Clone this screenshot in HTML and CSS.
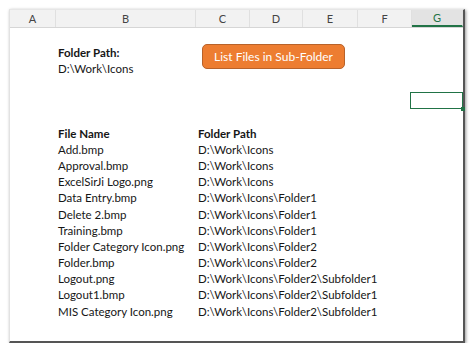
FILE: index.html
```html
<!DOCTYPE html>
<html lang="en">
<head>
    <meta charset="UTF-8">
    <title>List Files in Sub-Folder</title>
    <link rel="stylesheet" href="styles.css">
</head>
<body>

    <div class="sheet">
        <div class="col-head">
            <div>A</div>
            <div>B</div>
            <div>C</div>
            <div>D</div>
            <div>E</div>
            <div>F</div>
            <div class="active">G</div>
        </div>

        <div class="top">
            <div class="path-block">
                <div class="bold">Folder Path:</div>
                <div>D:\Work\Icons</div>
            </div>
            <button class="run-btn">List Files in Sub-Folder</button>
        </div>

        <div class="selected-cell"></div>

        <div class="files">
            <div class="bold">File Name</div><div class="bold">Folder Path</div>
            <div>Add.bmp</div><div>D:\Work\Icons</div>
            <div>Approval.bmp</div><div>D:\Work\Icons</div>
            <div>ExcelSirJi Logo.png</div><div>D:\Work\Icons</div>
            <div>Data Entry.bmp</div><div>D:\Work\Icons\Folder1</div>
            <div>Delete 2.bmp</div><div>D:\Work\Icons\Folder1</div>
            <div>Training.bmp</div><div>D:\Work\Icons\Folder1</div>
            <div>Folder Category Icon.png</div><div>D:\Work\Icons\Folder2</div>
            <div>Folder.bmp</div><div>D:\Work\Icons\Folder2</div>
            <div>Logout.png</div><div>D:\Work\Icons\Folder2\Subfolder1</div>
            <div>Logout1.bmp</div><div>D:\Work\Icons\Folder2\Subfolder1</div>
            <div>MIS Category Icon.png</div><div>D:\Work\Icons\Folder2\Subfolder1</div>
        </div>
    </div>

</body>
</html>
```

FILE: styles.css
```css
body {
    margin: 0;
    background: #fff;
    font-family: Lato, "Open Sans", sans-serif;
    font-size: 11.5px;
    color: #161616;
}
.sheet {
    position: relative;
    margin: 9px 0 0 9px;
    width: 453px;
    height: 331px;
    background: #fff;
    border-left: 1px solid #e2e2e2;
    border-top: 1px solid #e6e6e6;
    border-right: 2px solid #555;
    border-bottom: 2px solid #555;
    box-shadow: 1px 1px 3px #999;
}
.col-head {
    display: grid;
    grid-template-columns: 46px 140px 54px 53px 55px 54px 51px;
    height: 17px;
    background: #f2f2f2;
    border-bottom: 1px solid #d6d6d6;
    color: #444;
    font-size: 11px;
}
.col-head div {
    display: flex;
    align-items: center;
    justify-content: center;
    border-right: 1px solid #e0e0e0;
}
.col-head .active {
    background: #e3e3e3;
    border-bottom: 2px solid #217346;
    color: #217346;
}
.top {
    display: flex;
    padding: 17px 0 0 48px;
}
.path-block {
    width: 144px;
    line-height: 16px;
}
.bold {
    font-weight: bold;
}
.run-btn {
    width: 143px;
    height: 25px;
    margin-top: -1px;
    background: #ed7d31;
    color: #fff;
    border: 1px solid #b8622a;
    border-radius: 5px;
    font-family: inherit;
    font-size: 12px;
}
.selected-cell {
    position: absolute;
    left: 400px;
    top: 82px;
    width: 51px;
    height: 15px;
    border: 1px solid #217346;
}
.selected-cell::after {
    content: "";
    position: absolute;
    right: -3px;
    bottom: -3px;
    width: 4px;
    height: 4px;
    background: #217346;
}
.files {
    display: grid;
    grid-template-columns: 140px auto;
    grid-auto-rows: 16.2px;
    align-items: center;
    padding: 48px 0 0 48px;
}
```
